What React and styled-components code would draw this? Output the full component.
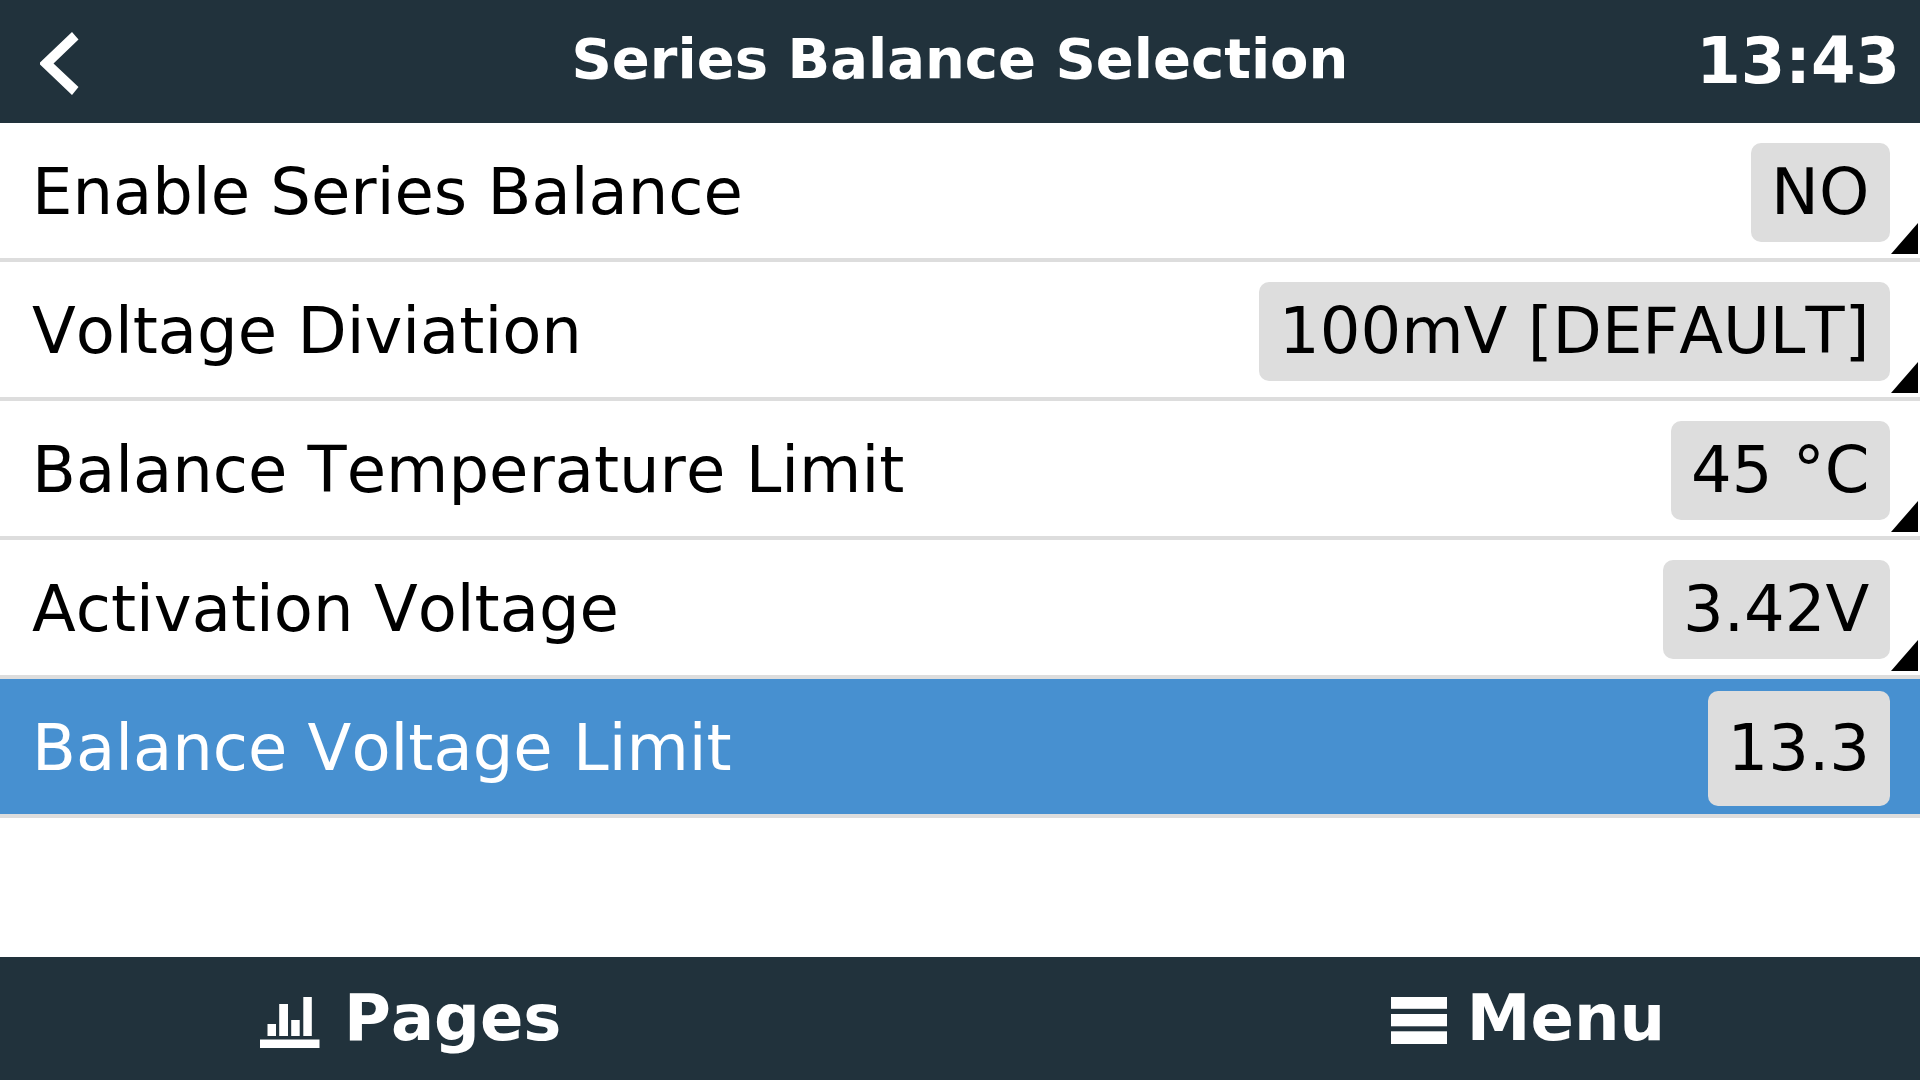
import { useState } from 'react'
import styled, { createGlobalStyle } from 'styled-components'

const GlobalStyle = createGlobalStyle`
  * {
    box-sizing: border-box;
  }

  body {
    margin: 0;
    background: #fff;
    color: #000;
    font-family: "DejaVu Sans", Verdana, sans-serif;
    font-kerning: none;
  }

  button, input, select {
    font-family: inherit;
    font-kerning: inherit;
    color: inherit;
    border: 0;
    margin: 0;
  }
`

const Page = styled.div`
  display: flex;
  flex-direction: column;
  min-height: 100vh;
`

const Header = styled.header`
  display: grid;
  grid-template-columns: 1fr auto 1fr;
  align-items: center;
  height: 123px;
  padding: 0 20px 2px;
  background: #21323c;
  color: #fff;
`

const BackButton = styled.button`
  display: flex;
  justify-self: start;
  padding: 6px 20px 0;
  background: none;
  cursor: pointer;
`

const Title = styled.h1`
  margin: 0;
  padding-bottom: 4px;
  font-size: 56px;
  font-weight: 700;
`

const Clock = styled.time`
  justify-self: end;
  font-size: 64px;
  font-weight: 700;
`

const List = styled.main`
  flex: 1;
`

const Row = styled.div`
  position: relative;
  display: flex;
  align-items: center;
  justify-content: space-between;
  height: 139px;
  padding: 4px 30px 0 32px;
  border-bottom: 4px solid #ddd;
  background: ${props => (props.$active ? '#4790d0' : '#fff')};
`

const Label = styled.label`
  padding-bottom: 2px;
  font-size: 64px;
  color: ${props => (props.$active ? '#fff' : '#000')};
`

const Select = styled.select`
  appearance: none;
  height: 99px;
  padding: 0 20px 2px;
  border-radius: 10px;
  background: #ddd;
  font-size: 64px;
  cursor: pointer;
`

const NumberBox = styled.input`
  field-sizing: content;
  height: 115px;
  padding: 0 20px 2px;
  border-radius: 10px;
  background: #ddd;
  font-size: 64px;
  outline: none;
`

const Corner = styled.svg`
  position: absolute;
  right: 2px;
  bottom: 4px;
  width: 27px;
  height: 31px;
`

const Footer = styled.footer`
  display: flex;
  align-items: center;
  justify-content: space-between;
  height: 123px;
  padding: 0 255px 0 260px;
  background: #21323c;
  color: #fff;
`

const FooterButton = styled.button`
  display: flex;
  align-items: center;
  gap: 20px;
  padding: 0;
  background: none;
  font-size: 64px;
  font-weight: 700;
  cursor: pointer;
`

const FooterText = styled.span`
  padding-bottom: 2px;
`

const BackIcon = () => (
  <svg width="39" height="63" viewBox="0 0 39 63" fill="#fff" aria-hidden="true">
    <path d="M32 0 L38.5 7.5 L13.5 31.5 L38.5 55 L32 63 L0 32.5 V30.5 Z" />
  </svg>
)

const PagesIcon = () => (
  <svg width="64" height="61" viewBox="0 0 64 61" fill="#fff" aria-hidden="true">
    <rect x="7.5" y="36" width="8.5" height="12" />
    <rect x="19.2" y="16" width="8.8" height="32" />
    <rect x="31.2" y="32" width="8.5" height="16" />
    <rect x="43.3" y="9" width="8.5" height="39" />
    <rect x="0" y="51.5" width="59.5" height="8.5" />
  </svg>
)

const MenuIcon = () => (
  <svg width="56" height="61" viewBox="0 0 56 61" fill="#fff" aria-hidden="true">
    <rect y="9" width="56" height="11.8" />
    <rect y="26" width="56" height="12.3" />
    <rect y="43.3" width="56" height="12.7" />
  </svg>
)

const settings = [
  { id: 'enable', label: 'Enable Series Balance', value: 'NO' },
  { id: 'deviation', label: 'Voltage Diviation', value: '100mV [DEFAULT]' },
  { id: 'temperature', label: 'Balance Temperature Limit', value: '45 °C' },
  { id: 'activation', label: 'Activation Voltage', value: '3.42V' },
]

export default function App () {
  const [limit, setLimit] = useState('13.3')

  return (
    <Page>
      <GlobalStyle />
      <Header>
        <BackButton aria-label="Back">
          <BackIcon />
        </BackButton>
        <Title>Series Balance Selection</Title>
        <Clock>13:43</Clock>
      </Header>
      <List>
        {settings.map(({ id, label, value }) => (
          <Row key={id}>
            <Label htmlFor={id}>{label}</Label>
            <Select id={id}>
              <option>{value}</option>
            </Select>
            <Corner viewBox="0 0 27 31" aria-hidden="true">
              <path d="M27 0 V31 H0 Z" />
            </Corner>
          </Row>
        ))}
        <Row $active>
          <Label htmlFor="limit" $active>Balance Voltage Limit</Label>
          <NumberBox
            id="limit"
            inputMode="decimal"
            value={limit}
            onChange={e => setLimit(e.target.value)}
          />
        </Row>
      </List>
      <Footer>
        <FooterButton>
          <PagesIcon />
          <FooterText>Pages</FooterText>
        </FooterButton>
        <FooterButton>
          <MenuIcon />
          <FooterText>Menu</FooterText>
        </FooterButton>
      </Footer>
    </Page>
  )
}
